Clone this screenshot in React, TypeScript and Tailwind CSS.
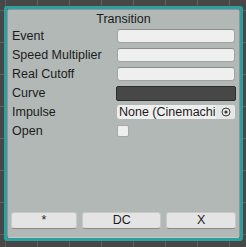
import React from 'react';

const rows = ['Event', 'Speed Multiplier', 'Real Cutoff'];

function TextField() {
  return <div className="w-[118px] h-[14px] rounded-[3px] bg-[#efefef] border border-[#a3a3a3] border-t-[#8c8c8c]" />;
}

export default function App() {
  return (
    <div
      className="w-[246px] h-[247px] pl-[4px] pt-[6px] bg-[#474747] bg-[linear-gradient(to_right,#5f5f5f_1px,transparent_1px),linear-gradient(to_bottom,#5f5f5f_1px,transparent_1px)] bg-[size:32px_32px] bg-[position:5px_10px] text-[12.5px] text-[#1c1c1c]"
      style={{ fontFamily: '"Liberation Sans", Arial, sans-serif' }}
    >
      <div className="w-[239px] h-[235px] border-[3px] border-[#2c9f9f] rounded-[3px]">
        <div className="flex flex-col h-full bg-[#b1b8b6] border border-[#8e9593] border-b-[#c2c8c6] rounded-[2px]">
          {/* Title */}
          <div className="h-[18px] pt-[1px] leading-[17px] text-center">Transition</div>

          {/* Fields */}
          <div className="flex flex-col gap-[5px] pt-[1px] pl-[4px] pr-[4px]">
            {rows.map(label => (
              <div key={label} className="flex items-center h-[14px]">
                <span className="flex-1 leading-[14px]">{label}</span>
                <TextField />
              </div>
            ))}
            <div className="flex items-center h-[14px]">
              <span className="flex-1 leading-[14px]">Curve</span>
              <div className="w-[120px] h-[15px] -mr-[1px] bg-[#474747] border border-[#2d2d2d] rounded-[2px]" />
            </div>
            <div className="flex items-center h-[14px]">
              <span className="flex-1 leading-[14px]">Impulse</span>
              <div className="w-[118px] h-[14px] flex items-center rounded-[3px] bg-[#efefef] overflow-hidden">
                <span className="flex-1 pl-[2px] whitespace-nowrap leading-[14px]">None (Cinemachi</span>
                <div className="w-[19px] h-full flex items-center justify-center bg-[#e6e6e6]">
                  <svg width="10" height="10" viewBox="0 0 10 10">
                    <circle cx="5" cy="5" r="4" fill="none" stroke="#3a3a3a" strokeWidth="1" />
                    <circle cx="5" cy="5" r="1.6" fill="#3a3a3a" />
                  </svg>
                </div>
              </div>
            </div>
            <div className="flex items-center h-[14px]">
              <span className="flex-1 leading-[14px]">Open</span>
              <div className="w-[118px]">
                <div className="w-[12px] h-[12px] bg-[#efefef] rounded-[2px] border border-[#a8a8a8]" />
              </div>
            </div>
          </div>

          {/* Buttons */}
          <div className="mt-auto mb-[8px] px-[3px] flex gap-[5px]">
            {['*', 'DC', 'X'].map(t => (
              <button
                key={t}
                className="flex-auto h-[17px] leading-[15px] rounded-[3px] bg-[#e4e4e4] border border-[#c8c8c8] border-b-[#8a8a8a] text-[12.5px] text-[#1c1c1c]"
              >
                {t}
              </button>
            ))}
          </div>
        </div>
      </div>
    </div>
  );
}
